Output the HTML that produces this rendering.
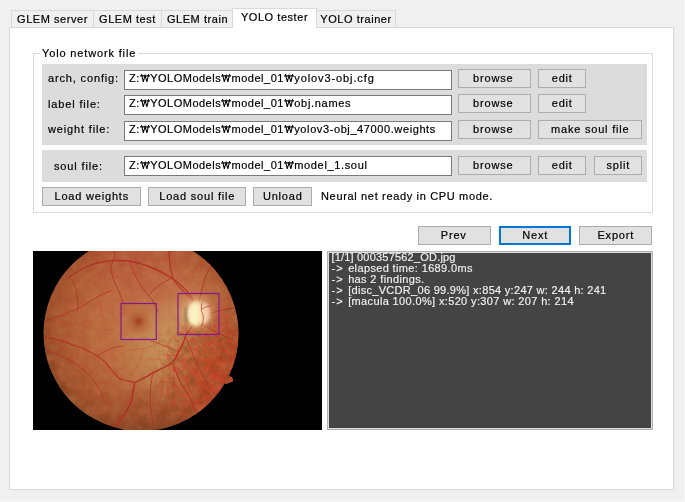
<!DOCTYPE html>
<html><head><meta charset="utf-8">
<style>
html,body{margin:0;padding:0;}
body{width:685px;height:502px;background:#f0f0f0;position:relative;overflow:hidden;font-family:"Liberation Sans",sans-serif;font-size:11px;color:#000;letter-spacing:0.7px;-webkit-text-stroke:0.2px #000;}
.abs{position:absolute;box-sizing:border-box;}
.tab{position:absolute;box-sizing:border-box;letter-spacing:0.55px;top:10px;height:18px;border:1px solid #d9d9d9;border-bottom:none;background:#f0f0f0;text-align:center;line-height:17px;white-space:nowrap;}
.tab.sel{top:8px;height:20px;background:#fff;line-height:16px;z-index:3;}
.pane{left:9px;top:27px;width:665px;height:463px;background:#fff;border:1px solid #d9d9d9;z-index:1;}
.z{z-index:2;}
.grp{left:33px;top:53px;width:620px;height:160px;border:1px solid #dcdcdc;}
.grplbl{letter-spacing:0.85px;left:40px;top:46px;background:#fff;padding:0 2px;line-height:15px;white-space:nowrap;}
.gray{background:#dcdcdc;}
.tab,.lbl,.inp,.grplbl,.log,.btn:not(.def),.btn.def span{filter:grayscale(1) blur(0.3px);}
.lbl{letter-spacing:0.85px;line-height:15px;white-space:nowrap;}
.inp{letter-spacing:0.5px;background:#fff;border:1px solid #7a7a7a;height:20px;line-height:15px;padding-left:4px;white-space:nowrap;overflow:hidden;}
.ar{letter-spacing:1.2px;}
.won{display:inline-block;vertical-align:baseline;margin:0 0.2px 0 0;overflow:visible;}
.btn{letter-spacing:0.8px;padding-left:0.5px;background:#e1e1e1;border:1px solid #adadad;height:19px;line-height:16px;text-align:center;white-space:nowrap;}
.btn.def{border:2px solid #0078d7;line-height:14px;}
.log{left:327px;top:251px;width:326px;height:179px;background:#444;border:1px solid #b0b0b0;box-shadow:inset 0 0 0 1px #ddd;color:#fff;line-height:11px;padding:0px 0 0 3.4px;letter-spacing:0.36px;color:#f2f2f2;-webkit-text-stroke:0.15px #f2f2f2;white-space:pre;}
</style></head><body>
<div class="tab" style="left:11px;width:83px;">GLEM server</div>
<div class="tab" style="left:93px;width:69px;">GLEM test</div>
<div class="tab" style="left:161px;width:73px;">GLEM train</div>
<div class="tab sel" style="left:232px;width:85px;">YOLO tester</div>
<div class="tab" style="left:316px;width:80px;">YOLO trainer</div>
<div class="abs pane"></div>
<div class="abs" style="left:684px;top:0;width:1px;height:502px;background:#f7f7f7;"></div>
<div class="abs" style="left:0;top:501px;width:685px;height:1px;background:#f7f7f7;"></div>
<div class="abs z grp"></div>
<div class="abs z grplbl">Yolo network file</div>
<div class="abs z gray" style="left:42px;top:64px;width:605px;height:81px;"></div>
<div class="abs z gray" style="left:42px;top:150px;width:605px;height:32px;"></div>

<div class="abs z lbl" style="left:48px;top:71px;">arch, config:</div>
<div class="abs z lbl" style="left:48px;top:97px;">label file:</div>
<div class="abs z lbl" style="left:48px;top:122px;">weight file:</div>
<div class="abs z lbl" style="left:54px;top:159px;">soul file:</div>

<div class="abs z inp" style="left:124px;top:70px;width:328px;">Z:<svg class="won" width="10.2" height="9" viewBox="0 0 10.2 9"><path d="M1.5 1 L3.3 8.8 L5.1 2.4 L6.9 8.8 L8.7 1" fill="none" stroke="#000" stroke-width="1.05" stroke-linejoin="miter"/><path d="M0.1 2.9 H10.1" fill="none" stroke="#000" stroke-width="1.2"/></svg>YOLOModels<svg class="won" width="10.2" height="9" viewBox="0 0 10.2 9"><path d="M1.5 1 L3.3 8.8 L5.1 2.4 L6.9 8.8 L8.7 1" fill="none" stroke="#000" stroke-width="1.05" stroke-linejoin="miter"/><path d="M0.1 2.9 H10.1" fill="none" stroke="#000" stroke-width="1.2"/></svg>model_01<svg class="won" width="10.2" height="9" viewBox="0 0 10.2 9"><path d="M1.5 1 L3.3 8.8 L5.1 2.4 L6.9 8.8 L8.7 1" fill="none" stroke="#000" stroke-width="1.05" stroke-linejoin="miter"/><path d="M0.1 2.9 H10.1" fill="none" stroke="#000" stroke-width="1.2"/></svg><span style="letter-spacing:0.9px">yolov3-obj.cfg</span></div>
<div class="abs z inp" style="left:124px;top:95px;width:328px;">Z:<svg class="won" width="10.2" height="9" viewBox="0 0 10.2 9"><path d="M1.5 1 L3.3 8.8 L5.1 2.4 L6.9 8.8 L8.7 1" fill="none" stroke="#000" stroke-width="1.05" stroke-linejoin="miter"/><path d="M0.1 2.9 H10.1" fill="none" stroke="#000" stroke-width="1.2"/></svg>YOLOModels<svg class="won" width="10.2" height="9" viewBox="0 0 10.2 9"><path d="M1.5 1 L3.3 8.8 L5.1 2.4 L6.9 8.8 L8.7 1" fill="none" stroke="#000" stroke-width="1.05" stroke-linejoin="miter"/><path d="M0.1 2.9 H10.1" fill="none" stroke="#000" stroke-width="1.2"/></svg>model_01<svg class="won" width="10.2" height="9" viewBox="0 0 10.2 9"><path d="M1.5 1 L3.3 8.8 L5.1 2.4 L6.9 8.8 L8.7 1" fill="none" stroke="#000" stroke-width="1.05" stroke-linejoin="miter"/><path d="M0.1 2.9 H10.1" fill="none" stroke="#000" stroke-width="1.2"/></svg><span style="letter-spacing:0.7px">obj.names</span></div>
<div class="abs z inp" style="left:124px;top:121px;width:328px;">Z:<svg class="won" width="10.2" height="9" viewBox="0 0 10.2 9"><path d="M1.5 1 L3.3 8.8 L5.1 2.4 L6.9 8.8 L8.7 1" fill="none" stroke="#000" stroke-width="1.05" stroke-linejoin="miter"/><path d="M0.1 2.9 H10.1" fill="none" stroke="#000" stroke-width="1.2"/></svg>YOLOModels<svg class="won" width="10.2" height="9" viewBox="0 0 10.2 9"><path d="M1.5 1 L3.3 8.8 L5.1 2.4 L6.9 8.8 L8.7 1" fill="none" stroke="#000" stroke-width="1.05" stroke-linejoin="miter"/><path d="M0.1 2.9 H10.1" fill="none" stroke="#000" stroke-width="1.2"/></svg>model_01<svg class="won" width="10.2" height="9" viewBox="0 0 10.2 9"><path d="M1.5 1 L3.3 8.8 L5.1 2.4 L6.9 8.8 L8.7 1" fill="none" stroke="#000" stroke-width="1.05" stroke-linejoin="miter"/><path d="M0.1 2.9 H10.1" fill="none" stroke="#000" stroke-width="1.2"/></svg><span style="letter-spacing:0.6px">yolov3-obj_47000.weights</span></div>
<div class="abs z inp" style="left:124px;top:156px;width:328px;line-height:17px;">Z:<svg class="won" width="10.2" height="9" viewBox="0 0 10.2 9"><path d="M1.5 1 L3.3 8.8 L5.1 2.4 L6.9 8.8 L8.7 1" fill="none" stroke="#000" stroke-width="1.05" stroke-linejoin="miter"/><path d="M0.1 2.9 H10.1" fill="none" stroke="#000" stroke-width="1.2"/></svg>YOLOModels<svg class="won" width="10.2" height="9" viewBox="0 0 10.2 9"><path d="M1.5 1 L3.3 8.8 L5.1 2.4 L6.9 8.8 L8.7 1" fill="none" stroke="#000" stroke-width="1.05" stroke-linejoin="miter"/><path d="M0.1 2.9 H10.1" fill="none" stroke="#000" stroke-width="1.2"/></svg>model_01<svg class="won" width="10.2" height="9" viewBox="0 0 10.2 9"><path d="M1.5 1 L3.3 8.8 L5.1 2.4 L6.9 8.8 L8.7 1" fill="none" stroke="#000" stroke-width="1.05" stroke-linejoin="miter"/><path d="M0.1 2.9 H10.1" fill="none" stroke="#000" stroke-width="1.2"/></svg><span style="letter-spacing:0.65px">model_1.soul</span></div>

<div class="abs z btn" style="left:458px;top:69px;width:73px;padding-right:3px;">browse</div>
<div class="abs z btn" style="left:458px;top:94px;width:73px;padding-right:3px;">browse</div>
<div class="abs z btn" style="left:458px;top:120px;width:73px;padding-right:3px;">browse</div>
<div class="abs z btn" style="left:458px;top:156px;width:73px;padding-right:3px;">browse</div>
<div class="abs z btn" style="left:538px;top:69px;width:48px;">edit</div>
<div class="abs z btn" style="left:538px;top:94px;width:48px;">edit</div>
<div class="abs z btn" style="left:538px;top:120px;width:104px;">make soul file</div>
<div class="abs z btn" style="left:538px;top:156px;width:48px;">edit</div>
<div class="abs z btn" style="left:594px;top:156px;width:48px;">split</div>

<div class="abs z btn" style="left:42px;top:187px;width:99px;">Load weights</div>
<div class="abs z btn" style="left:148px;top:187px;width:98px;">Load soul file</div>
<div class="abs z btn" style="left:253px;top:187px;width:59px;">Unload</div>
<div class="abs z lbl" style="left:321px;top:189px;letter-spacing:0.66px;">Neural net ready in CPU mode.</div>

<div class="abs z btn" style="left:418px;top:226px;width:73px;padding-right:2px;">Prev</div>
<div class="abs z btn def" style="left:499px;top:226px;width:72px;"><span>Next</span></div>
<div class="abs z btn" style="left:579px;top:226px;width:73px;">Export</div>

<div class="abs z" id="fundus" style="left:33px;top:251px;width:289px;height:179px;background:#000;overflow:hidden;">
<svg width="289" height="179" viewBox="0 0 289 179" style="position:absolute;left:0;top:0;display:block">
<defs>
<clipPath id="cc"><circle cx="108" cy="82.5" r="97.5"/><path d="M194 125 L199 126 L200 130 L196 132 L192 133 Z"/></clipPath>
<radialGradient id="base" cx="115" cy="72" r="112" gradientUnits="userSpaceOnUse">
<stop offset="0" stop-color="#c4764a"/><stop offset="0.46" stop-color="#bb6a40"/><stop offset="0.75" stop-color="#aa5630"/><stop offset="0.9" stop-color="#9a4c28"/><stop offset="1" stop-color="#80401e"/></radialGradient>
<radialGradient id="tan" cx="135" cy="98" r="58" gradientUnits="userSpaceOnUse">
<stop offset="0" stop-color="#cca468" stop-opacity="0.8"/><stop offset="0.55" stop-color="#c2965a" stop-opacity="0.42"/><stop offset="1" stop-color="#b88850" stop-opacity="0"/></radialGradient>
<radialGradient id="topred" cx="105" cy="5" r="70" gradientUnits="userSpaceOnUse">
<stop offset="0" stop-color="#b4483a" stop-opacity="0.5"/><stop offset="1" stop-color="#b4483a" stop-opacity="0"/></radialGradient>
<radialGradient id="botdark" cx="120" cy="185" r="55" gradientUnits="userSpaceOnUse">
<stop offset="0" stop-color="#7a3a20" stop-opacity="0.55"/><stop offset="1" stop-color="#7a3a20" stop-opacity="0"/></radialGradient>
<radialGradient id="pale" cx="150" cy="70" r="60" gradientUnits="userSpaceOnUse">
<stop offset="0" stop-color="#d8a070" stop-opacity="0.6"/><stop offset="0.5" stop-color="#cc8c5c" stop-opacity="0.3"/><stop offset="1" stop-color="#c88050" stop-opacity="0"/></radialGradient>
<radialGradient id="red" cx="185" cy="120" r="60" gradientUnits="userSpaceOnUse">
<stop offset="0" stop-color="#b83c1c" stop-opacity="0.8"/><stop offset="0.6" stop-color="#b04020" stop-opacity="0.5"/><stop offset="1" stop-color="#b04820" stop-opacity="0"/></radialGradient>
<radialGradient id="mac" cx="105.5" cy="70.5" r="14" gradientUnits="userSpaceOnUse">
<stop offset="0" stop-color="#98381a" stop-opacity="0.95"/><stop offset="0.4" stop-color="#a44822" stop-opacity="0.5"/><stop offset="1" stop-color="#b05a30" stop-opacity="0"/></radialGradient>
<radialGradient id="dischalo" cx="163" cy="62" r="22" gradientUnits="userSpaceOnUse">
<stop offset="0" stop-color="#f0d0a0" stop-opacity="0.9"/><stop offset="0.6" stop-color="#e0b080" stop-opacity="0.55"/><stop offset="1" stop-color="#d09060" stop-opacity="0"/></radialGradient>
<filter id="vein" x="0" y="0" width="100%" height="100%" color-interpolation-filters="sRGB"><feTurbulence type="turbulence" baseFrequency="0.11" numOctaves="2" seed="11"/><feColorMatrix type="matrix" values="0 0 0 0 0.80  0 0 0 0 0.24  0 0 0 0 0.17  0 0 0 -9 1.9"/><feGaussianBlur stdDeviation="0.7"/></filter>
<filter id="olive" x="0" y="0" width="100%" height="100%" color-interpolation-filters="sRGB"><feTurbulence type="fractalNoise" baseFrequency="0.14" numOctaves="2" seed="5"/><feColorMatrix type="matrix" values="0 0 0 0 0.42  0 0 0 0 0.28  0 0 0 0 0.10  0 0 0 3.2 -1.3"/></filter>
<radialGradient id="tigm" cx="182" cy="118" r="70" gradientUnits="userSpaceOnUse"><stop offset="0" stop-color="#fff" stop-opacity="1"/><stop offset="0.55" stop-color="#fff" stop-opacity="0.8"/><stop offset="1" stop-color="#fff" stop-opacity="0"/></radialGradient>
<mask id="tigmask" maskUnits="userSpaceOnUse" x="0" y="0" width="289" height="179"><rect width="289" height="179" fill="#000"/><rect width="289" height="179" fill="url(#tigm)"/><rect width="289" height="179" fill="#fff" opacity="0.12"/></mask>
<filter id="tx" x="0" y="0" width="100%" height="100%"><feTurbulence type="fractalNoise" baseFrequency="0.09" numOctaves="3" seed="7" result="n"/><feColorMatrix in="n" type="matrix" values="0 0 0 0 0.55  0 0 0 0 0.22  0 0 0 0 0.08  1.6 0 0 0 -0.55"/></filter>
<filter id="tx2" x="0" y="0" width="100%" height="100%"><feTurbulence type="fractalNoise" baseFrequency="0.1" numOctaves="2" seed="3" result="n"/><feColorMatrix in="n" type="matrix" values="0 0 0 0 0.92  0 0 0 0 0.72  0 0 0 0 0.48  0 1.8 0 0 -0.75"/></filter>
<filter id="b1" x="-20%" y="-20%" width="140%" height="140%"><feGaussianBlur stdDeviation="0.7"/></filter>
<filter id="b2" x="-30%" y="-30%" width="160%" height="160%"><feGaussianBlur stdDeviation="1.6"/></filter>
</defs>
<rect width="289" height="179" fill="#000"/>
<g clip-path="url(#cc)">
<rect width="289" height="179" fill="url(#base)"/>
<path d="M194 125 L199 126 L200 130 L196 132 L192 133 Z" fill="#94502c"/>
<rect width="289" height="179" fill="url(#pale)"/>
<rect width="289" height="179" fill="url(#tan)"/>
<rect width="289" height="179" fill="url(#topred)"/>
<rect width="289" height="179" fill="url(#botdark)"/>
<rect width="289" height="179" fill="url(#red)"/>
<g mask="url(#tigmask)"><rect width="289" height="179" filter="url(#olive)" opacity="0.42"/><rect width="289" height="179" filter="url(#vein)" opacity="0.75"/></g>
<rect width="289" height="179" filter="url(#tx)" opacity="0.45"/>
<rect width="289" height="179" filter="url(#tx2)" opacity="0.08"/>
<rect width="289" height="179" fill="url(#mac)"/>
<g fill="none" stroke="#b02c24" stroke-linecap="round" stroke-linejoin="round" filter="url(#b1)" opacity="0.85">
<path d="M164 54 C158 44 148 33 139 27 C126 19 110 12 96 10 C85 9 70 10 61 13 C52 16 46 19 36 26" stroke-width="1.3"/>
<path d="M136 -1 C136 8 137 17 140 27 C144 35 152 42 160 50" stroke-width="1.1"/>
<path d="M162 71 C157 78 154 82 153 84 C151 90 149 96 145.5 101 C143 106 142 109 139.8 111 C135 115 131 116.5 126.5 118.5 C121 121 117 123.5 113.5 125.7 C109 128.5 105 130 101.8 131.6 C100 138 100 143 98.9 149 C96 158 90 166 82 176" stroke-width="1.5"/>
<path d="M101.8 131.6 C96 130 90 129 85.8 127.2 C82 123 79 120 77 117 C72 110 68 107 64 105 C55 99 47 96 40 94 C30 90 20 87 10 86" stroke-width="1.1"/>
<path d="M139.8 111.5 C141 117 143 122 145.6 127.2 C148 133 152 139 155.8 144.7 C159 151 162 158 166 168" stroke-width="1.1"/>
<path d="M153 86 C158 100 166 118 178 140" stroke-width="0.8"/>
<path d="M166 50 C168 42 170 34 172 27 C175 19 179 13 183 8" stroke-width="1"/>
<path d="M172 64 C180 61 190 59 205 56" stroke-width="0.9"/>
<path d="M169 73 C176 78 186 83 200 89" stroke-width="0.9"/>
<path d="M81 -1 C82 4 82 8 78 14 C78 20 79 26 83 34 C86 40 88 46 90 52" stroke-width="0.9"/>
<path d="M96 10 C100 20 104 30 112 40 C118 47 122 52 125 60" stroke-width="0.8"/>
<path d="M139 27 C130 32 122 36 116 44" stroke-width="0.8"/>
<path d="M12 70 C24 66 36 62 50 55 C58 50 66 44 78 40" stroke-width="0.8"/>
<path d="M15 100 C28 104 40 110 52 120 C60 128 66 136 70 146" stroke-width="0.8"/>
<path d="M64 105 C72 100 80 96 90 95" stroke-width="0.7"/>
<path d="M120 121 C118 132 116 145 118 160 C119 168 120 174 121 179" stroke-width="0.8"/>
<path d="M144 100 C134 96 126 92 118 90" stroke-width="0.7"/>
<path d="M40 30 C44 40 46 50 44 62" stroke-width="0.7"/>
</g>
<g fill="none" stroke="#c43a24" stroke-linecap="round" filter="url(#b1)" opacity="0.55" stroke-width="0.9">
<path d="M160 96 C170 104 178 112 186 124 M168 92 C180 100 190 110 198 124 M176 90 C188 96 198 104 205 114 M156 112 C164 122 170 134 174 148 M164 110 C174 120 182 132 188 146 M150 124 C156 136 160 146 162 160 M178 104 C172 116 168 128 166 142 M190 100 C184 112 180 126 180 140 M198 108 C194 118 192 128 192 138 M140 118 C142 130 142 142 140 156 M130 124 C130 136 128 148 124 160 M182 84 C190 88 198 94 204 102 M186 72 C194 76 200 80 206 88"/>
</g>
<g fill="none" stroke="#c0483a" stroke-linecap="round" filter="url(#b1)" opacity="0.45" stroke-width="0.8">
<path d="M14 72 C26 70 38 70 50 74 C60 78 70 80 82 78 M20 52 C30 50 40 44 48 36 M30 110 C40 108 50 112 58 120 C64 128 66 138 64 150 M50 74 C52 84 50 94 44 104 M60 40 C66 48 70 58 70 70 M100 22 C104 30 110 36 118 40 M126 40 C122 46 120 52 122 58 M132 88 C124 94 114 98 104 98 C96 98 88 102 84 108 M110 100 C108 110 104 118 98 124 M70 146 C76 150 80 158 82 168 M96 146 C100 154 102 162 102 172 M134 132 C136 144 136 156 134 170 M150 30 C156 26 162 20 166 12 M176 36 C182 34 188 30 192 24 M186 50 C192 50 198 48 204 44 M60 24 C56 32 50 38 42 42"/>
</g>
<rect width="289" height="179" fill="url(#dischalo)"/>
<ellipse cx="171" cy="62.5" rx="5.5" ry="10.5" fill="#f4d2b4" opacity="0.9" filter="url(#b2)"/>
<ellipse cx="153.5" cy="64" rx="2" ry="9" fill="#6a5a30" opacity="0.6" filter="url(#b2)"/>
<ellipse cx="163" cy="62.5" rx="8.5" ry="12.5" fill="#f4dca8" filter="url(#b2)"/>
<ellipse cx="161.5" cy="63" rx="5.5" ry="10" fill="#fbf2c4" filter="url(#b2)"/>
<g fill="none" stroke="#c8483a" stroke-width="0.9" filter="url(#b1)" opacity="0.9">
<path d="M169 52 C168 56 168 60 170 64 C171 68 170 72 168 76"/>
<path d="M169 58 C172 56 175 55 178 55"/>
</g>
</g>
<g fill="none" stroke="#841a8a" stroke-width="1.2">
<rect x="88" y="52.5" width="35.3" height="36"/>
<rect x="145" y="42.5" width="41" height="41"/>
</g>
</svg>
</div>
<div class="abs z log"><span style="letter-spacing:0.2px">[1/1] 000357562_OD.jpg</span>
<span class="ar">-&gt; </span>elapsed time: 1689.0ms
<span class="ar">-&gt; </span>has 2 findings.
<span class="ar">-&gt; </span><span style="letter-spacing:0.3px">[disc_VCDR_06 99.9%] x:854 y:247 w: 244 h: 241</span>
<span class="ar">-&gt; </span>[macula 100.0%] x:520 y:307 w: 207 h: 214</div>
</body></html>
